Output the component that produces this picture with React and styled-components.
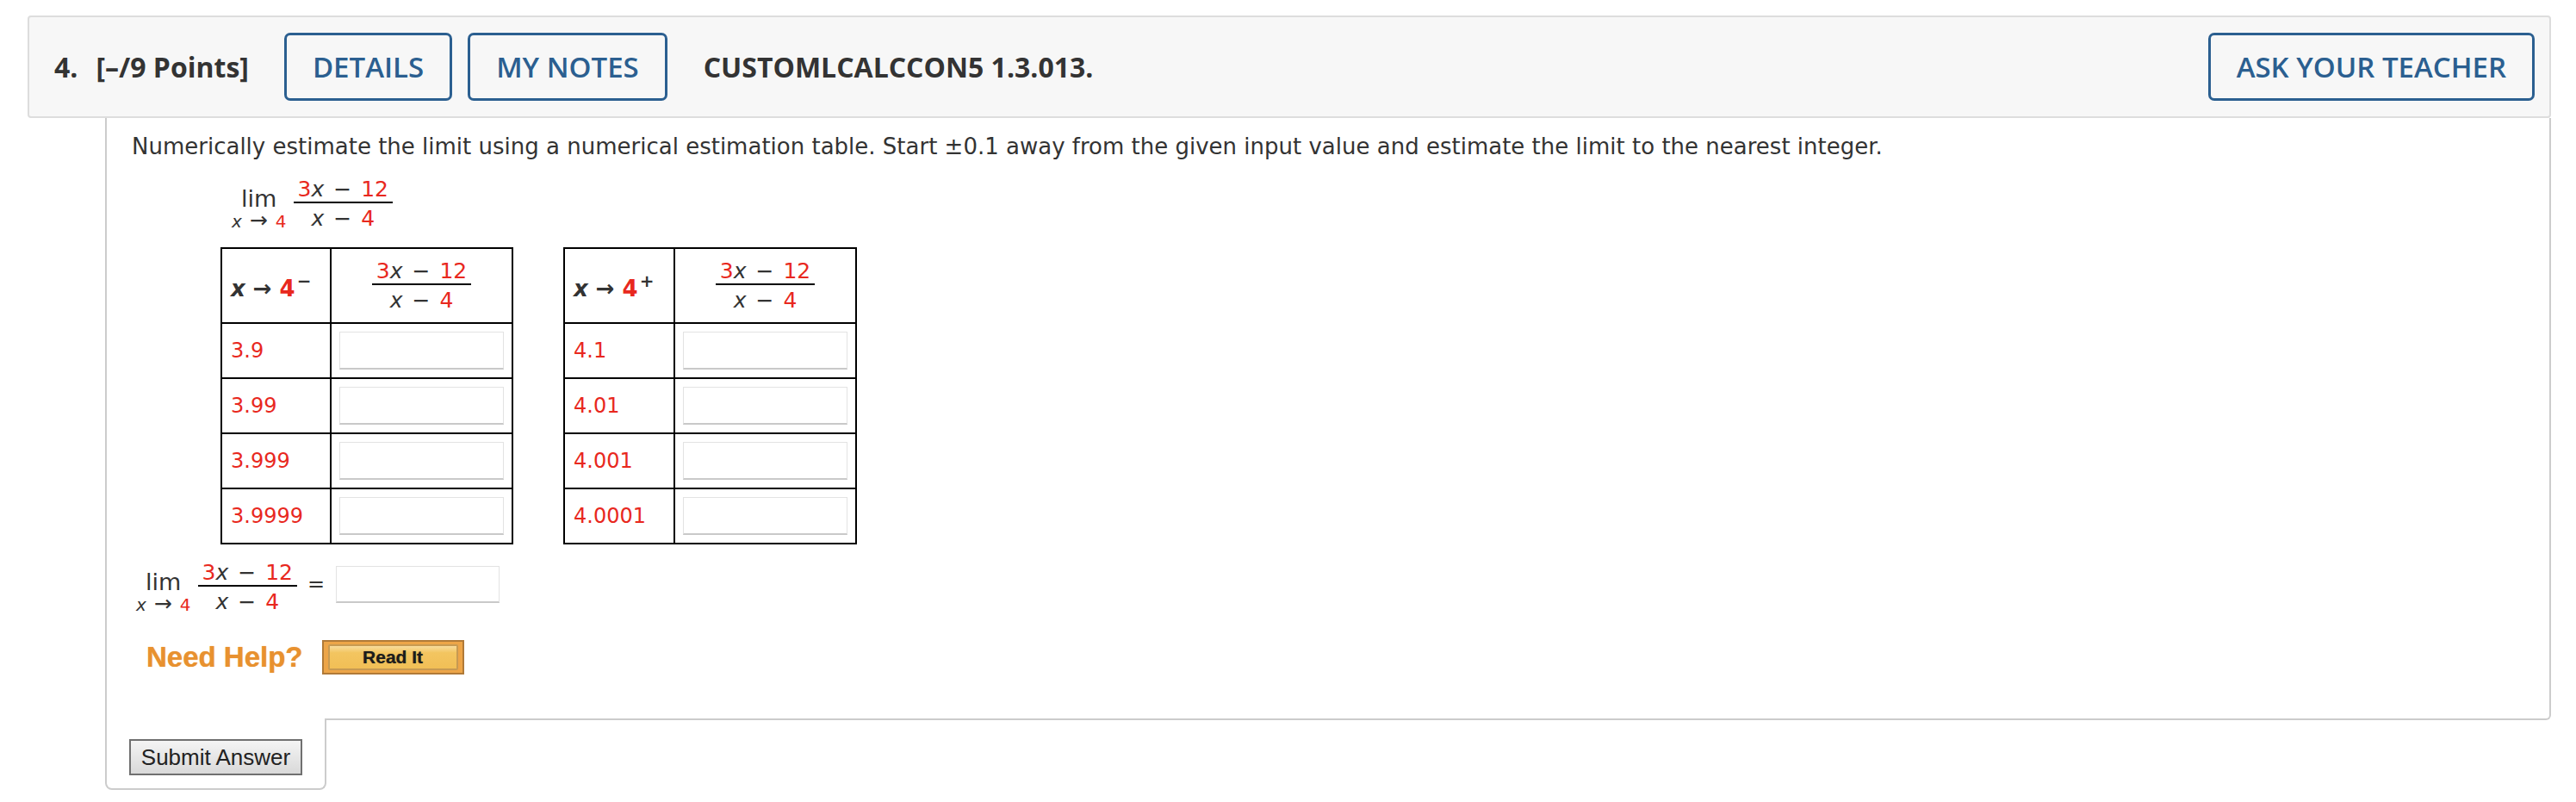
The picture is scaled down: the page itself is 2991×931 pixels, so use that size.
import React from 'react';
import styled, { createGlobalStyle } from 'styled-components';

const GlobalStyle = createGlobalStyle`
  html, body { margin: 0; padding: 0; background: #ffffff; }
  body { font-family: "DejaVu Sans", Verdana, sans-serif; color: #333333; }
  *, *::before, *::after { box-sizing: border-box; }
`;

const RED = '#e8281e';
const INK = '#333333';

const Page = styled.div`
  padding: 18px 29px 14px 32px;
`;

const Header = styled.div`
  display: flex;
  align-items: center;
  height: 119px;
  padding: 0 17px 0 29px;
  background: #f7f7f7;
  border: 2px solid #dddddd;
  border-radius: 4px;
  font-family: "Open Sans", sans-serif;
  color: ${INK};
`;

const HeadText = styled.span`
  font-size: 32px;
  font-weight: 700;
  white-space: nowrap;
  margin-right: ${p => p.$mr || 0}px;
  flex: ${p => (p.$grow ? 1 : 'none')};
`;

const OutlineButton = styled.button`
  height: 79px;
  padding: 0 30px;
  border: 3px solid #2b5f90;
  border-radius: 7px;
  background: transparent;
  color: #2b5f90;
  font-family: "Open Sans", sans-serif;
  font-size: 33px;
  font-weight: 600;
  white-space: nowrap;
  cursor: pointer;
  margin-right: ${p => p.$mr || 0}px;
`;

const Panel = styled.div`
  margin-left: 90px;
`;

const Content = styled.div`
  border: 2px solid #cccccc;
  border-top: none;
  border-bottom-right-radius: 6px;
  padding: 17px 29px 51px 29px;
`;

const Instruction = styled.p`
  margin: 0;
  font-size: 26px;
  line-height: 32px;
  color: ${INK};
  white-space: nowrap;
`;

const LimitRow = styled.div`
  display: flex;
  align-items: flex-end;
  margin: ${p => p.$m};
`;

const LimCol = styled.div`
  display: flex;
  flex-direction: column;
  align-items: center;
  margin-right: 8px;
`;

const LimWord = styled.span`
  font-size: 27px;
  line-height: 26px;
  color: ${INK};
`;

const LimSub = styled.span`
  display: flex;
  align-items: baseline;
  font-size: 20px;
  line-height: 22px;
  margin-top: 1px;
  white-space: nowrap;
  color: ${INK};
`;

const SubArrow = styled.span`
  font-size: 25px;
  line-height: 22px;
  margin: 0 9px;
  color: ${INK};
`;

const Frac = styled.span`
  display: inline-flex;
  flex-direction: column;
  align-items: center;
  color: ${INK};
`;

const Num = styled.span`
  font-size: 25px;
  line-height: 28px;
  padding: 0 5px;
  white-space: nowrap;
`;

const Bar = styled.span`
  align-self: stretch;
  height: 2px;
  background: #000000;
`;

const Den = styled.span`
  font-size: 25px;
  line-height: 28px;
  margin-top: 4px;
  white-space: nowrap;
`;

const Red = styled.span`
  color: ${RED};
`;

const Var = styled.i`
  font-style: italic;
  color: ${INK};
`;

const Op = styled.span`
  margin: 0 ${p => p.$sp ?? 10}px;
`;

const Equals = styled.span`
  font-size: 24px;
  line-height: 28px;
  align-self: center;
  margin: 0 13px 8px 12px;
  color: ${INK};
`;

const AnswerInput = styled.input`
  width: ${p => p.$w || 191}px;
  height: ${p => p.$h || 44}px;
  border: 1px solid #e3e3e3;
  border-bottom: 2px solid #c9c9c9;
  background: #ffffff;
  padding: 0 6px;
  font-size: 22px;
  outline: none;
  align-self: ${p => (p.$center ? 'center' : 'auto')};
  margin-bottom: ${p => p.$mb || 0}px;
`;

const Tables = styled.div`
  display: flex;
  align-items: flex-start;
  gap: 58px;
  margin: 19px 0 0 103px;
`;

const Grid = styled.div`
  display: grid;
  grid-template-columns: ${p => p.$c1}px 1fr;
  width: ${p => p.$w}px;
  border: 2px solid #000000;
`;

const Cell = styled.div`
  display: flex;
  align-items: center;
  justify-content: ${p => (p.$center ? 'center' : 'flex-start')};
  height: ${p => p.$h}px;
  padding-left: ${p => (p.$center ? 0 : 10)}px;
  border-right: ${p => (p.$first ? '2px solid #000000' : 'none')};
  border-bottom: ${p => (p.$last ? 'none' : '2px solid #000000')};
  font-size: 24px;
  color: ${RED};
  white-space: nowrap;
`;

const ArrowHead = styled.span`
  font-size: 26px;
  font-weight: 700;
  color: ${INK};
  white-space: nowrap;
`;

const Sup = styled.sup`
  font-size: 20px;
  color: ${INK};
  vertical-align: 11px;
  margin-left: 2px;
`;

const HelpRow = styled.div`
  display: flex;
  align-items: center;
  margin: 30px 0 0 17px;
`;

const NeedHelp = styled.span`
  font-family: "Liberation Sans", Arial, sans-serif;
  font-weight: 700;
  font-size: 33px;
  color: #e8912f;
  text-shadow: 0 0 1px rgba(232, 145, 47, 0.8);
  margin-right: 22px;
`;

const ReadItOuter = styled.button`
  width: 165px;
  height: 40px;
  padding: 3px 5px;
  border: 2px solid #b07a38;
  background: #eda548;
  cursor: pointer;
`;

const ReadItInner = styled.span`
  display: flex;
  align-items: center;
  justify-content: center;
  width: 100%;
  height: 100%;
  border: 2px solid #c79a52;
  border-radius: 2px;
  background: linear-gradient(#f8dc9c 0%, #f3c560 30%, #f1bf56 100%);
  font-family: "Liberation Sans", Arial, sans-serif;
  font-weight: 700;
  font-size: 21px;
  color: #1c1c1c;
  text-shadow: 0 0 1px rgba(0, 0, 0, 0.5);
`;

const SubmitTab = styled.div`
  width: 257px;
  margin-top: -2px;
  padding: 24px 0 15px 26px;
  background: #ffffff;
  border: 2px solid #cccccc;
  border-top: none;
  border-radius: 0 0 8px 8px;
  position: relative;
`;

const SubmitButton = styled.button`
  width: 201px;
  height: 42px;
  padding: 0;
  border: 2px solid #707070;
  background: linear-gradient(#f4f4f4, #d9d9d9);
  font-family: "Liberation Sans", Arial, sans-serif;
  font-size: 26px;
  color: #222222;
  cursor: pointer;
`;

const Expr = ({ num, den }) => (
  <Frac>
    <Num>{num}</Num>
    <Bar />
    <Den>{den}</Den>
  </Frac>
);

const NumExpr = () => (
  <>
    <Red>3</Red>
    <Var>x</Var>
    <Op $sp={11}>−</Op>
    <Red>12</Red>
  </>
);

const DenExpr = () => (
  <>
    <Var>x</Var>
    <Op $sp={11}>−</Op>
    <Red>4</Red>
  </>
);

const Limit = ({ m, children }) => (
  <LimitRow $m={m}>
    <LimCol>
      <LimWord>lim</LimWord>
      <LimSub>
        <Var>x</Var>
        <SubArrow>→</SubArrow>
        <Red>4</Red>
      </LimSub>
    </LimCol>
    <Expr num={<NumExpr />} den={<DenExpr />} />
    {children}
  </LimitRow>
);

const ValueTable = ({ side, values, c1, w }) => (
  <Grid $c1={c1} $w={w}>
    <Cell $h={87} $first>
      <ArrowHead>
        <i>x</i>
        <Op $sp={9}>→</Op>
        <Red>4</Red>
        <Sup>{side}</Sup>
      </ArrowHead>
    </Cell>
    <Cell $h={87} $center>
      <Expr num={<NumExpr />} den={<DenExpr />} />
    </Cell>
    {values.map((v, i) => {
      const last = i === values.length - 1;
      return (
        <React.Fragment key={v}>
          <Cell $h={last ? 62 : 64} $first $last={last}>{v}</Cell>
          <Cell $h={last ? 62 : 64} $center $last={last}>
            <AnswerInput type="text" />
          </Cell>
        </React.Fragment>
      );
    })}
  </Grid>
);

export default function App() {
  return (
    <>
      <GlobalStyle />
      <Page>
        <Header>
          <HeadText $mr={21}>4.</HeadText>
          <HeadText $mr={41}>[–/9 Points]</HeadText>
          <OutlineButton $mr={18}>DETAILS</OutlineButton>
          <OutlineButton $mr={42}>MY NOTES</OutlineButton>
          <HeadText $grow>CUSTOMLCALCCON5 1.3.013.</HeadText>
          <OutlineButton>ASK YOUR TEACHER</OutlineButton>
        </Header>
        <Panel>
          <Content>
            <Instruction>
              Numerically estimate the limit using a numerical estimation table. Start ±0.1 away from the given input value and estimate the limit to the nearest integer.
            </Instruction>
            <Limit m="20px 0 0 116px" />
            <Tables>
              <ValueTable side="−" c1={127} w={340} values={['3.9', '3.99', '3.999', '3.9999']} />
              <ValueTable side="+" c1={128} w={341} values={['4.1', '4.01', '4.001', '4.0001']} />
            </Tables>
            <Limit m="19px 0 0 5px">
              <Equals>=</Equals>
              <AnswerInput type="text" $w={190} $h={43} $center $mb={7} />
            </Limit>
            <HelpRow>
              <NeedHelp>Need Help?</NeedHelp>
              <ReadItOuter>
                <ReadItInner>Read It</ReadItInner>
              </ReadItOuter>
            </HelpRow>
          </Content>
          <SubmitTab>
            <SubmitButton>Submit Answer</SubmitButton>
          </SubmitTab>
        </Panel>
      </Page>
    </>
  );
}
